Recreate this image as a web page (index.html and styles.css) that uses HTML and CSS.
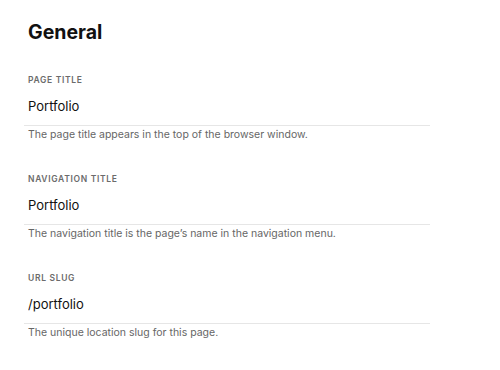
FILE: index.html
```html
<!DOCTYPE html>
<html lang="en">
<head>
  <meta charset="UTF-8" />
  <title>Page Settings | General</title>
  <link rel="stylesheet" href="styles.css">
</head>
<body>
  <div class="settings">
    <h1>General</h1>

    <div class="field">
      <label for="page-title">Page Title</label>
      <input id="page-title" type="text" value="Portfolio" />
      <p class="help">The page title appears in the top of the browser window.</p>
    </div>

    <div class="field">
      <label for="nav-title">Navigation Title</label>
      <input id="nav-title" type="text" value="Portfolio" />
      <p class="help">The navigation title is the page’s name in the navigation menu.</p>
    </div>

    <div class="field">
      <label for="url-slug">URL Slug</label>
      <input id="url-slug" type="text" value="/portfolio" />
      <p class="help">The unique location slug for this page.</p>
    </div>
  </div>
</body>
</html>
```

FILE: styles.css
```css
body {
  margin: 0;
  padding: 0;
  font-family: Inter, "Noto Sans", sans-serif;
  background: #ffffff;
  color: #111111;
}
.settings {
  width: 406px;
  padding: 18px 0 0 24px;
}
h1 {
  margin: 0 0 28px 4px;
  font-size: 19.5px;
  line-height: 28px;
  font-weight: 700;
}
.field {
  margin-bottom: 30px;
}
label {
  display: block;
  margin: 0 0 10px 4px;
  font-size: 8.5px;
  line-height: 12px;
  font-weight: 600;
  letter-spacing: 0.08em;
  text-transform: uppercase;
  color: #6b6b6b;
}
input[type="text"] {
  display: block;
  width: 100%;
  box-sizing: border-box;
  margin: 0;
  padding: 0 0 9px 4px;
  border: none;
  border-bottom: 1px solid #e6e6e6;
  outline: none;
  font-family: inherit;
  font-size: 13px;
  line-height: 20px;
  color: #111111;
  background: none;
}
.help {
  margin: 1px 0 0 4px;
  font-size: 10.5px;
  line-height: 16px;
  color: #666666;
}
```
